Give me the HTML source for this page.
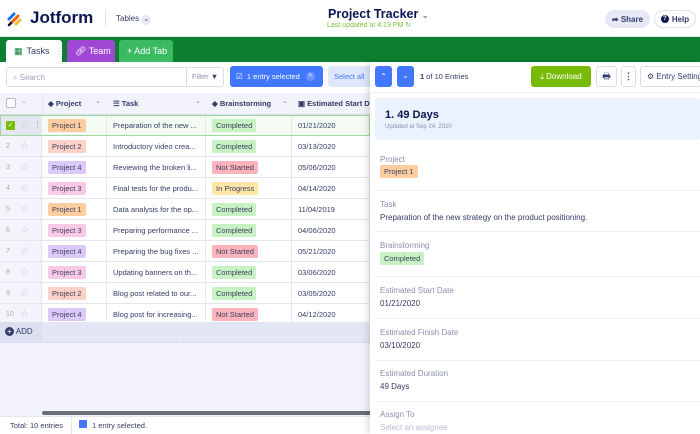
<!DOCTYPE html><html><head><style>
*{box-sizing:border-box;margin:0;padding:0}
body{width:700px;height:434px;overflow:hidden;font-family:"Liberation Sans",sans-serif;background:#f3f3fb;position:relative;color:#343c6a}
.a{position:absolute}
.hdr{left:0;top:0;width:700px;height:37px;background:#fff;border-bottom:1px solid #e3e5f0}
.green{left:0;top:37px;width:700px;height:25px;background:#0b7e2f}
.tab{top:40px;height:22px;border-radius:3px 3px 0 0;font-size:9px;display:flex;align-items:center;padding-left:8px;color:#fff}
.tb{top:62px;left:0;width:370px;height:31px;background:#fff}
.cell{position:absolute;height:21px;border-right:1px solid #e3e5f0;border-bottom:1px solid #e3e5f0;font-size:7.5px;display:flex;align-items:center;padding-left:6px;color:#343c6a;background:#fff}
.pill{padding:2px 4px;border-radius:2px;font-size:7.5px;color:#3a3f5e}
.p1{background:#fdcda0}.p2{background:#fdd0c8}.p3{background:#f9c9e8}.p4{background:#dcc9fb}
.c{background:#c9f2c4}.n{background:#fcb3bb}.i{background:#fde6a6}
.lbl{left:380px;font-size:8px;color:#8a8fad}
.val{left:380px;font-size:8px;color:#343c6a}
.div{left:375px;width:325px;height:1px;background:#eef0f6}
</style></head><body>
<div class="a hdr"></div>
<svg class="a" style="left:7px;top:11px" width="16" height="16" viewBox="0 0 16 16"><path d="M2 8l5-5" stroke="#0a74ff" stroke-width="3" stroke-linecap="round"/><path d="M4 12l7-7" stroke="#ff6100" stroke-width="3" stroke-linecap="round"/><path d="M9 13l4-4" stroke="#ffb629" stroke-width="3" stroke-linecap="round"/><path d="M2 14l2-2" stroke="#0a1551" stroke-width="2.5" stroke-linecap="round"/></svg>
<div class="a" style="left:30px;top:8px;font-size:17px;font-weight:bold;color:#0a1551">Jotform</div>
<div class="a" style="left:105px;top:10px;width:1px;height:17px;background:#e0e2ec"></div>
<div class="a" style="left:116px;top:14px;font-size:8px;color:#343c6a">Tables <span style="display:inline-block;width:10px;height:10px;border-radius:50%;background:#e6e8f3;font-size:7px;text-align:center;line-height:9px">⌄</span></div>
<div class="a" style="left:328px;top:7px;font-size:12.5px;font-weight:bold;color:#0a1551">Project Tracker <span style="font-size:8px;color:#777">⌄</span></div>
<div class="a" style="left:327px;top:21px;font-size:7px;color:#7cc23b">Last updated at 4:19 PM ↻</div>
<div class="a" style="left:605px;top:10px;width:45px;height:18px;border-radius:9px;background:#e6e9f5;font-size:8px;font-weight:bold;display:flex;align-items:center;justify-content:center">➦ Share</div>
<div class="a" style="left:654px;top:10px;width:42px;height:18px;border-radius:9px;border:1px solid #e0e2ec;background:#fff;font-size:8px;font-weight:bold;display:flex;align-items:center;justify-content:center"><span style="display:inline-block;width:8px;height:8px;border-radius:50%;background:#0a1551;color:#fff;font-size:6px;text-align:center;line-height:8px;margin-right:3px">?</span>Help</div>
<div class="a green"></div>
<div class="a tab" style="left:6px;width:56px;background:#fff;color:#343c6a"><span style="color:#0b7e2f;margin-right:4px">▦</span>Tasks <span style="margin-left:5px;color:#aaa">⋮</span></div>
<div class="a tab" style="left:67px;width:48px;background:#a047d6">🔗︎ Team</div>
<div class="a tab" style="left:119px;width:54px;background:#3cb963">+ Add Tab</div>
<div class="a tb"></div>
<div class="a" style="left:6px;top:67px;width:218px;height:20px;border:1px solid #dadde9;border-radius:3px;background:#fff;font-size:8px;color:#a0a4bd;padding:5px 0 0 6px">⌕ Search</div>
<div class="a" style="left:186px;top:67px;width:1px;height:20px;background:#dadde9"></div>
<div class="a" style="left:192px;top:72px;font-size:7.5px;color:#8a8fad">Filter <b style="color:#343c6a">▼</b></div>
<div class="a" style="left:230px;top:66px;width:93px;height:21px;border-radius:3px;background:#4277ff;color:#fff;font-size:7.5px;display:flex;align-items:center;padding-left:6px">☑&nbsp; 1 entry selected <span style="margin-left:6px;background:#6e95ff;border-radius:50%;width:9px;height:9px;font-size:6px;text-align:center;line-height:9px">×</span></div>
<div class="a" style="left:328px;top:66px;width:45px;height:21px;border-radius:3px;background:#dfe7fd;color:#4277ff;font-size:7.5px;padding:6px 0 0 6px">Select all</div>
<div class="a" style="left:0;top:93px;width:370px;height:22px;background:#f1f2fa;border-bottom:1px solid #dadde9"></div>
<div class="a" style="left:6px;top:98px;width:10px;height:10px;border:1px solid #b8bbd0;border-radius:2px;background:#fff"></div>
<div class="a" style="left:21px;top:97px;font-size:7px;color:#aaa">⌄</div>
<div class="a" style="left:42px;top:93px;width:1px;height:250px;background:#e3e5f0"></div>
<div class="a" style="left:48px;top:99px;font-size:7.5px;font-weight:bold">◆ Project</div><div class="a" style="left:95px;top:97px;font-size:7px;color:#888">⌄</div>
<div class="a" style="left:113px;top:99px;font-size:7.5px;font-weight:bold">☰ Task</div><div class="a" style="left:195px;top:97px;font-size:7px;color:#888">⌄</div>
<div class="a" style="left:212px;top:99px;font-size:7.5px;font-weight:bold">◆ Brainstorming</div><div class="a" style="left:282px;top:97px;font-size:7px;color:#888">⌄</div>
<div class="a" style="left:298px;top:99px;font-size:7.5px;font-weight:bold;white-space:nowrap">▣ Estimated Start D</div>
<div id="rows"></div>
<div class="a" style="left:0;top:322px;width:370px;height:21px;background:#e4e6f5;border-bottom:1px dashed #d0d3e4"></div>
<div class="a" style="left:0;top:322px;width:42px;height:21px;background:#dcdff0"></div>
<div class="a" style="left:5px;top:327px;font-size:8px;color:#343c6a"><span style="display:inline-block;width:9px;height:9px;border-radius:50%;background:#343c6a;color:#fff;font-size:8px;line-height:9px;text-align:center">+</span> ADD</div>
<div class="a" style="left:42px;top:411px;width:330px;height:4px;border-radius:2px;background:#6a6d7a"></div>
<div class="a" style="left:0;top:416px;width:370px;height:18px;background:#fff;border-top:1px solid #e3e5f0"></div>
<div class="a" style="left:71px;top:416px;width:1px;height:18px;background:#e3e5f0"></div>
<div class="a" style="left:10px;top:421px;font-size:7.5px;color:#343c6a">Total: 10 entries</div>
<div class="a" style="left:79px;top:420px;width:8px;height:8px;background:#4277ff;border-radius:1px"></div>
<div class="a" style="left:92px;top:421px;font-size:7.5px;color:#343c6a">1 entry selected.</div>
<div class="a" style="left:370px;top:62px;width:330px;height:372px;background:#fff;box-shadow:-3px 0 6px rgba(0,0,0,.12)"></div>
<div class="a" style="left:370px;top:92px;width:330px;height:1px;background:#eef0f6"></div>
<div class="a" style="left:375px;top:66px;width:17px;height:21px;background:#4277ff;border-radius:3px;color:#fff;font-size:8px;text-align:center;line-height:21px">⌃</div>
<div class="a" style="left:397px;top:66px;width:17px;height:21px;background:#4277ff;border-radius:3px;color:#fff;font-size:8px;text-align:center;line-height:19px">⌄</div>
<div class="a" style="left:420px;top:72px;font-size:7.5px;color:#343c6a"><b>1</b> of 10 Entries</div>
<div class="a" style="left:531px;top:66px;width:60px;height:21px;background:#78bb07;border-radius:3px;color:#fff;font-size:8px;text-align:center;line-height:21px">⤓ Download</div>
<div class="a" style="left:596px;top:66px;width:21px;height:21px;border:1px solid #dadde9;border-radius:3px;font-size:9px;text-align:center;line-height:19px">🖶︎</div>
<div class="a" style="left:621px;top:66px;width:15px;height:21px;border:1px solid #dadde9;border-radius:3px;font-size:9px;text-align:center;line-height:19px;font-weight:bold">⋮</div>
<div class="a" style="left:640px;top:66px;width:70px;height:21px;border:1px solid #dadde9;border-radius:3px;font-size:8px;line-height:19px;padding-left:6px;white-space:nowrap">⚙ Entry Settings</div>
<div class="a" style="left:375px;top:98px;width:325px;height:42px;background:#e9f2fd;border-radius:3px"></div>
<div class="a" style="left:385px;top:109px;font-size:11px;font-weight:bold;color:#0a1551">1. 49 Days</div>
<div class="a" style="left:385px;top:124px;font-size:6px;color:#8a8fad">Updated at Sep 24, 2020</div>
<div class="a lbl" style="top:155px">Project</div>
<div class="a val" style="top:167px"><span class="pill p1">Project 1</span></div>
<div class="a div" style="top:190px"></div>
<div class="a lbl" style="top:200px">Task</div>
<div class="a val" style="top:213px">Preparation of the new strategy on the product positioning.</div>
<div class="a div" style="top:231px"></div>
<div class="a lbl" style="top:241px">Brainstorming</div>
<div class="a val" style="top:254px"><span class="pill c">Completed</span></div>
<div class="a div" style="top:276px"></div>
<div class="a lbl" style="top:286px">Estimated Start Date</div>
<div class="a val" style="top:299px">01/21/2020</div>
<div class="a div" style="top:318px"></div>
<div class="a lbl" style="top:328px">Estimated Finish Date</div>
<div class="a val" style="top:341px">03/10/2020</div>
<div class="a div" style="top:360px"></div>
<div class="a lbl" style="top:369px">Estimated Duration</div>
<div class="a val" style="top:382px">49 Days</div>
<div class="a div" style="top:401px"></div>
<div class="a lbl" style="top:410px">Assign To</div>
<div class="a lbl" style="top:423px;color:#b8bbd0">Select an assignee</div>
<script>
var d=[["p1","Project 1","Preparation of the new ...","c","Completed","01/21/2020"],["p2","Project 2","Introductory video crea...","c","Completed","03/13/2020"],["p4","Project 4","Reviewing the broken li...","n","Not Started","05/06/2020"],["p3","Project 3","Final tests for the produ...","i","In Progress","04/14/2020"],["p1","Project 1","Data analysis for the op...","c","Completed","11/04/2019"],["p3","Project 3","Preparing performance ...","c","Completed","04/06/2020"],["p4","Project 4","Preparing the bug fixes ...","n","Not Started","05/21/2020"],["p3","Project 3","Updating banners on th...","c","Completed","03/06/2020"],["p2","Project 2","Blog post related to our...","c","Completed","03/05/2020"],["p4","Project 4","Blog post for increasing...","n","Not Started","04/12/2020"]];
var h="";d.forEach(function(r,i){var y=115+i*21,s=i==0;var bg=s?"#f3fbf2":"#fff";
h+='<div class="cell" style="left:0;top:'+y+'px;width:42px;background:'+(s?"#e3e6ee":"#f4f5fb")+';color:#aaa;font-size:7px">'+(s?'<span style="display:inline-block;width:9px;height:9px;background:#78bb07;border-radius:1px;color:#fff;font-size:7px;line-height:9px;text-align:center">✓</span>':(i+1))+'<span style="position:absolute;left:20px;color:#c5c8d8;font-size:10px">☆</span>'+(s?'<span style="position:absolute;left:34px;color:#888">⋮</span>':'')+'</div>';
h+='<div class="cell" style="left:42px;top:'+y+'px;width:65px;background:'+bg+'"><span class="pill '+r[0]+'">'+r[1]+'</span></div>';
h+='<div class="cell" style="left:107px;top:'+y+'px;width:99px;background:'+bg+';white-space:nowrap">'+r[2]+'</div>';
h+='<div class="cell" style="left:206px;top:'+y+'px;width:86px;background:'+bg+'"><span class="pill '+r[3]+'">'+r[4]+'</span></div>';
h+='<div class="cell" style="left:292px;top:'+y+'px;width:78px;background:'+bg+'">'+r[5]+'</div>';});
h+='<div class="a" style="left:0;top:115px;width:370px;height:21px;border:1px solid #9fd9a0"></div>';
document.getElementById("rows").innerHTML=h;
</script>
</body></html>
